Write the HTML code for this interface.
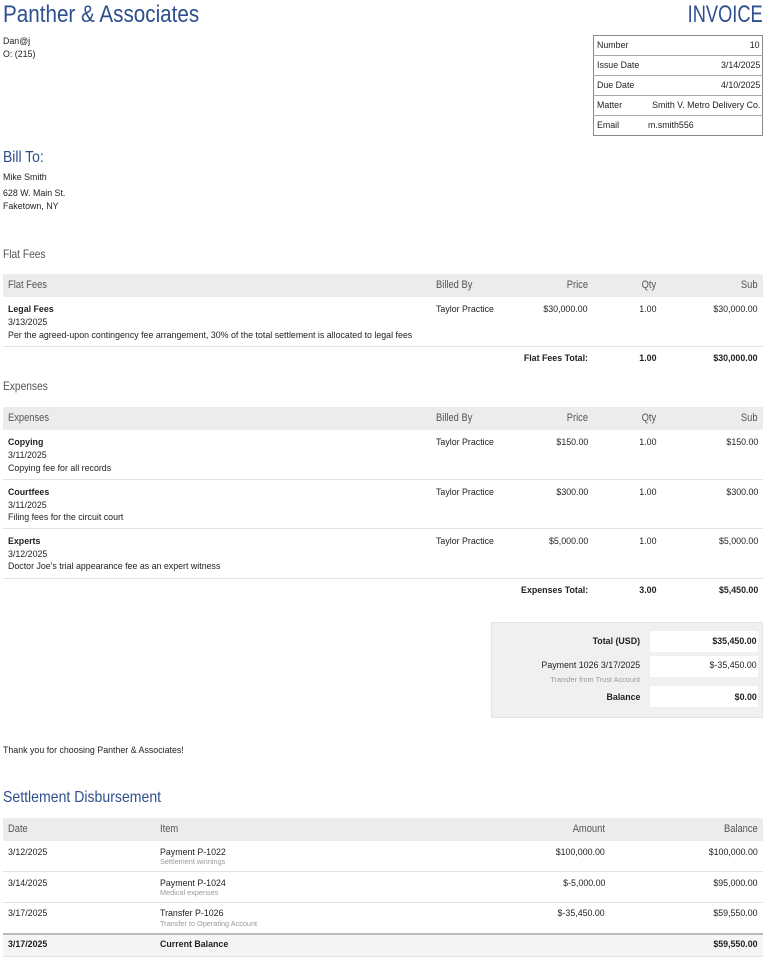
<!DOCTYPE html>
<html><head><meta charset="utf-8"><style>
*{margin:0;padding:0;box-sizing:border-box}
body{width:768px;height:958px;background:#fff;font-family:"Liberation Sans",sans-serif;font-size:9.5px;color:#222;position:relative;overflow:hidden}
.a{position:absolute;white-space:nowrap;transform:scaleX(.93);transform-origin:left}
.a.r{transform-origin:right;text-align:right}
.box{position:absolute;transform:none}
.c{font-family:"Liberation Sans",sans-serif;transform:scaleX(.85)!important}
.h{color:#2d4f8e}
.g{color:#555}
.b{font-weight:bold}
.hdr{position:absolute;left:3px;width:760px;background:#ececec;height:23px}
.line{position:absolute;left:3px;width:760px;height:1px;background:#e2e2e2}
.sm{font-size:7.3px;color:#999;transform:none!important}
</style></head><body>
<div class="a h" style="left:3px;top:1px;font-size:24px;transform:scaleX(.86)">Panther &amp; Associates</div>
<div class="a h r" style="right:5px;top:1px;font-size:24px;transform:scaleX(.76)">INVOICE</div>
<div class="a" style="left:3px;top:36px">Dan@j</div>
<div class="a" style="left:3px;top:49px">O: (215)</div>

<div class="box" style="left:593px;top:35px;width:170px;height:101px;border:1px solid #888"></div>
<div class="box" style="left:593px;top:55px;width:170px;height:1px;background:#aaa"></div>
<div class="box" style="left:593px;top:75px;width:170px;height:1px;background:#aaa"></div>
<div class="box" style="left:593px;top:95px;width:170px;height:1px;background:#aaa"></div>
<div class="box" style="left:593px;top:115px;width:170px;height:1px;background:#aaa"></div>
<div class="a" style="left:597px;top:40px">Number</div><div class="a r" style="right:8px;top:40px">10</div>
<div class="a" style="left:597px;top:60px">Issue Date</div><div class="a r" style="right:8px;top:60px">3/14/2025</div>
<div class="a" style="left:597px;top:80px">Due Date</div><div class="a r" style="right:8px;top:80px">4/10/2025</div>
<div class="a" style="left:597px;top:100px">Matter</div><div class="a r" style="right:8px;top:100px">Smith V. Metro Delivery Co.</div>
<div class="a" style="left:597px;top:120px">Email</div><div class="a" style="left:648px;top:120px;width:49px;overflow:hidden">m.smith556</div>

<div class="a h" style="left:3px;top:149px;font-size:16px;transform:scaleX(.87)">Bill To:</div>
<div class="a" style="left:3px;top:172px">Mike Smith</div>
<div class="a" style="left:3px;top:188px">628 W. Main St.</div>
<div class="a" style="left:3px;top:201px">Faketown, NY</div>

<div class="a c g" style="left:3px;top:247px;font-size:12px">Flat Fees</div>
<div class="hdr" style="top:274px"></div>
<div class="a c g" style="left:8px;top:279px;font-size:11px">Flat Fees</div>
<div class="a c g" style="left:436px;top:279px;font-size:11px">Billed By</div>
<div class="a c g r" style="right:180px;top:279px;font-size:11px">Price</div>
<div class="a c g r" style="right:112px;top:279px;font-size:11px">Qty</div>
<div class="a c g r" style="right:10px;top:279px;font-size:11px">Sub</div>
<div class="a b" style="left:8px;top:304px">Legal Fees</div>
<div class="a" style="left:8px;top:317px">3/13/2025</div>
<div class="a" style="left:8px;top:330px">Per the agreed-upon contingency fee arrangement, 30% of the total settlement is allocated to legal fees</div>
<div class="a" style="left:436px;top:304px">Taylor Practice</div>
<div class="a r" style="right:180px;top:304px">$30,000.00</div>
<div class="a r" style="right:112px;top:304px">1.00</div>
<div class="a r" style="right:10px;top:304px">$30,000.00</div>
<div class="line" style="top:346px"></div>
<div class="a b r" style="right:180px;top:353px">Flat Fees Total:</div>
<div class="a b r" style="right:112px;top:353px">1.00</div>
<div class="a b r" style="right:10px;top:353px">$30,000.00</div>

<div class="a c g" style="left:3px;top:379px;font-size:12px">Expenses</div>
<div class="hdr" style="top:407px"></div>
<div class="a c g" style="left:8px;top:412px;font-size:11px">Expenses</div>
<div class="a c g" style="left:436px;top:412px;font-size:11px">Billed By</div>
<div class="a c g r" style="right:180px;top:412px;font-size:11px">Price</div>
<div class="a c g r" style="right:112px;top:412px;font-size:11px">Qty</div>
<div class="a c g r" style="right:10px;top:412px;font-size:11px">Sub</div>

<div class="a b" style="left:8px;top:437px">Copying</div>
<div class="a" style="left:8px;top:450px">3/11/2025</div>
<div class="a" style="left:8px;top:463px">Copying fee for all records</div>
<div class="a" style="left:436px;top:437px">Taylor Practice</div>
<div class="a r" style="right:180px;top:437px">$150.00</div>
<div class="a r" style="right:112px;top:437px">1.00</div>
<div class="a r" style="right:10px;top:437px">$150.00</div>
<div class="line" style="top:479px"></div>
<div class="a b" style="left:8px;top:487px">Courtfees</div>
<div class="a" style="left:8px;top:500px">3/11/2025</div>
<div class="a" style="left:8px;top:512px">Filing fees for the circuit court</div>
<div class="a" style="left:436px;top:487px">Taylor Practice</div>
<div class="a r" style="right:180px;top:487px">$300.00</div>
<div class="a r" style="right:112px;top:487px">1.00</div>
<div class="a r" style="right:10px;top:487px">$300.00</div>
<div class="line" style="top:528px"></div>
<div class="a b" style="left:8px;top:536px">Experts</div>
<div class="a" style="left:8px;top:549px">3/12/2025</div>
<div class="a" style="left:8px;top:561px">Doctor Joe's trial appearance fee as an expert witness</div>
<div class="a" style="left:436px;top:536px">Taylor Practice</div>
<div class="a r" style="right:180px;top:536px">$5,000.00</div>
<div class="a r" style="right:112px;top:536px">1.00</div>
<div class="a r" style="right:10px;top:536px">$5,000.00</div>
<div class="line" style="top:578px"></div>
<div class="a b r" style="right:180px;top:585px">Expenses Total:</div>
<div class="a b r" style="right:112px;top:585px">3.00</div>
<div class="a b r" style="right:10px;top:585px">$5,450.00</div>

<div class="box" style="left:491px;top:622px;width:272px;height:96px;background:#f0f0f0;border:1px solid #e4e4e4"></div>
<div class="box" style="left:650px;top:631px;width:108px;height:21px;background:#fff"></div>
<div class="box" style="left:650px;top:656px;width:108px;height:21px;background:#fff"></div>
<div class="box" style="left:650px;top:686px;width:108px;height:21px;background:#fff"></div>
<div class="a b r" style="right:128px;top:636px">Total (USD)</div>
<div class="a b r" style="right:11px;top:636px">$35,450.00</div>
<div class="a r" style="right:128px;top:660px">Payment 1026 3/17/2025</div>
<div class="a sm r" style="right:128px;top:675px">Transfer from Trust Account</div>
<div class="a r" style="right:11px;top:660px">$-35,450.00</div>
<div class="a b r" style="right:128px;top:692px">Balance</div>
<div class="a b r" style="right:11px;top:692px">$0.00</div>

<div class="a" style="left:3px;top:745px">Thank you for choosing Panther &amp; Associates!</div>

<div class="a h" style="left:3px;top:789px;font-size:16px;transform:scaleX(.88)">Settlement Disbursement</div>
<div class="hdr" style="top:818px"></div>
<div class="a c g" style="left:8px;top:823px;font-size:11px">Date</div>
<div class="a c g" style="left:160px;top:823px;font-size:11px">Item</div>
<div class="a c g r" style="right:163px;top:823px;font-size:11px">Amount</div>
<div class="a c g r" style="right:10px;top:823px;font-size:11px">Balance</div>

<div class="a" style="left:8px;top:847px">3/12/2025</div>
<div class="a" style="left:160px;top:847px">Payment P-1022</div>
<div class="a sm" style="left:160px;top:857px">Settlement winnings</div>
<div class="a r" style="right:163px;top:847px">$100,000.00</div>
<div class="a r" style="right:10px;top:847px">$100,000.00</div>
<div class="line" style="top:871px"></div>
<div class="a" style="left:8px;top:878px">3/14/2025</div>
<div class="a" style="left:160px;top:878px">Payment P-1024</div>
<div class="a sm" style="left:160px;top:888px">Medical expenses</div>
<div class="a r" style="right:163px;top:878px">$-5,000.00</div>
<div class="a r" style="right:10px;top:878px">$95,000.00</div>
<div class="line" style="top:902px"></div>
<div class="a" style="left:8px;top:908px">3/17/2025</div>
<div class="a" style="left:160px;top:908px">Transfer P-1026</div>
<div class="a sm" style="left:160px;top:919px">Transfer to Operating Account</div>
<div class="a r" style="right:163px;top:908px">$-35,450.00</div>
<div class="a r" style="right:10px;top:908px">$59,550.00</div>
<div class="box" style="left:3px;top:933px;width:760px;height:24px;background:#f5f5f5;border-top:2px solid #bbb;border-bottom:1px solid #e2e2e2"></div>
<div class="a b" style="left:8px;top:939px">3/17/2025</div>
<div class="a b" style="left:160px;top:939px">Current Balance</div>
<div class="a b r" style="right:10px;top:939px">$59,550.00</div>
</body></html>
